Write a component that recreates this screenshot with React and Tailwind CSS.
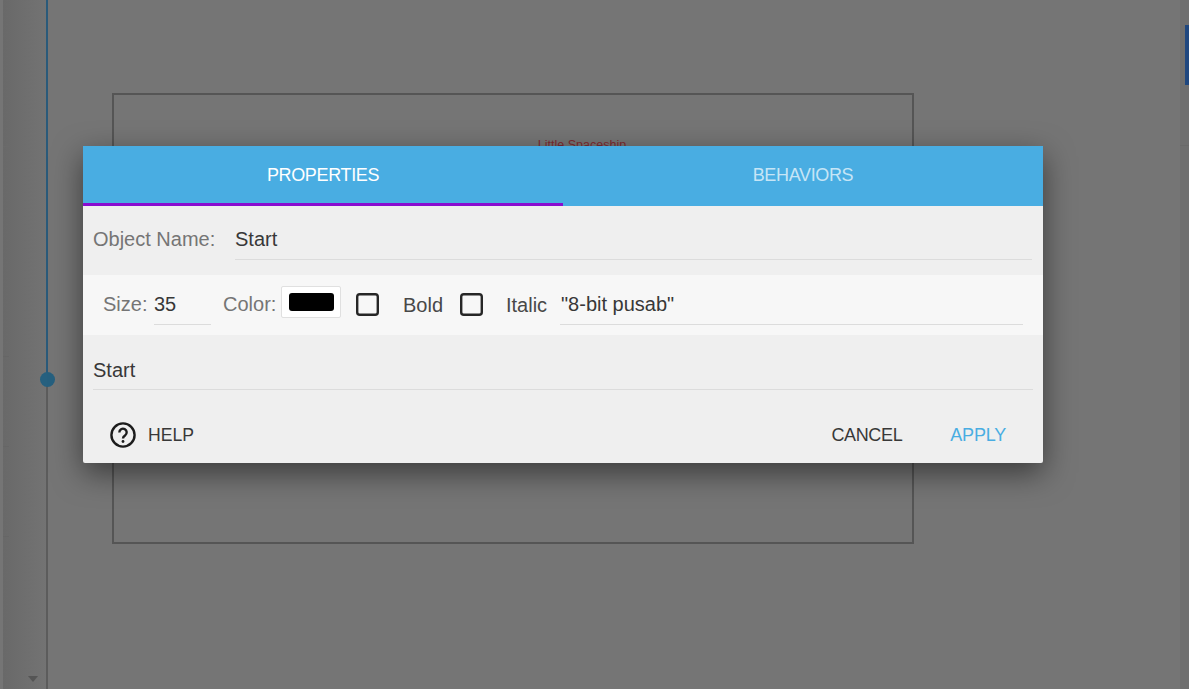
import React from "react";

function Underlined({ value, className = "" }) {
  return (
    <div className={`border-b border-[#dcdcdc] text-[20px] leading-[24px] text-[#383838] ${className}`}>{value}</div>
  );
}

function Check({ className = "" }) {
  return (
    <svg width="23" height="23" viewBox="0 0 23 23" fill="none" className={`shrink-0 ${className}`}>
      <rect x="1.2" y="1.2" width="20.6" height="20.6" rx="2.6" stroke="#262626" strokeWidth="2.4" />
    </svg>
  );
}

export default function App() {
  return (
    <div className="relative h-[689px] w-[1189px] overflow-hidden bg-[#757575] font-['Liberation_Sans',Arial,sans-serif]">
      <div className="flex h-full">
        <div className="relative w-[45px] shrink-0 ml-[3px] bg-gradient-to-r from-[#696969] to-[#737373] border-r-2 border-[#5c5c5c]">
          <div className="absolute right-[-2px] top-0 h-[379px] w-[2px] bg-[#2a5a7a]" />
          <div className="absolute left-[36.5px] top-[371.5px] h-[15px] w-[15px] rounded-full bg-[#26607f]" />
          <div className="absolute left-0 top-[146px] h-px w-[6px] bg-[#6b6b6b]" />
          <div className="absolute left-0 top-[356px] h-px w-[6px] bg-[#666]" />
          <div className="absolute left-0 top-[446px] h-px w-[6px] bg-[#666]" />
          <div className="absolute left-0 top-[536px] h-px w-[6px] bg-[#666]" />
          <div className="absolute left-[24.5px] top-[676px] h-0 w-0 border-x-[5px] border-t-[6px] border-x-transparent border-t-[#555]" />
        </div>
        <div className="flex-1 pl-[64px] pt-[93px]">
          <div className="h-[451px] w-[802px] border-2 border-[#555] pt-[43px] text-center text-[12.5px] leading-[14px] text-[#7d2a30]">
            <span className="relative left-[69px]">Little Spaceship</span>
          </div>
        </div>
        <div className="relative w-[9px] shrink-0 bg-[#6f6f6f]">
          <div className="absolute right-0 top-[25px] h-[60px] w-[4px] bg-[#1f477f]" />
          <div className="absolute inset-x-0 top-[145px] h-px bg-[#6a6a6a]" />
        </div>
      </div>

      <div className="absolute left-[83px] top-[146px] w-[960px] rounded-[2px] bg-[#efefef] shadow-[0_10px_30px_rgba(0,0,0,0.5)]">
        <div className="flex h-[60px] bg-[#49ade2] text-[18px] tracking-[-0.35px]">
          <div className="flex w-1/2 items-center justify-center border-b-[3px] border-[#8a0ccf] pt-[2px] text-white">PROPERTIES</div>
          <div className="flex w-1/2 items-center justify-center border-b-[3px] border-transparent pt-[2px] text-[#c6e5f6]">BEHAVIORS</div>
        </div>

        <div className="flex h-[69px] items-start pl-[10px] pr-[11px] pt-[21px]">
          <span className="w-[142px] shrink-0 text-[20px] leading-[24px] text-[#757575]">Object Name:</span>
          <Underlined value="Start" className="h-[33px] flex-1" />
        </div>

        <div className="flex h-[60px] items-start bg-[#f7f7f7] pl-[20px] text-[#757575]">
          <span className="mt-[17px] w-[51px] shrink-0 text-[20px] leading-[24px]">Size:</span>
          <Underlined value="35" className="mt-[17px] h-[33px] w-[57px] shrink-0" />
          <span className="ml-[12px] mt-[17px] w-[58px] shrink-0 text-[20px] leading-[24px]">Color:</span>
          <div className="mt-[11px] flex h-[32px] w-[60px] shrink-0 items-center justify-center rounded-[2px] border border-[#e0e0e0] bg-white">
            <div className="h-[18px] w-[45px] rounded-[3px] bg-black" />
          </div>
          <Check className="ml-[15px] mt-[18px]" />
          <span className="ml-[24px] mt-[18px] w-[57px] shrink-0 text-[20px] leading-[24px] text-[#484848]">Bold</span>
          <Check className="mt-[18px]" />
          <span className="ml-[23px] mt-[18px] w-[54px] shrink-0 text-[20px] leading-[24px] text-[#484848]">Italic</span>
          <Underlined value={'"8-bit pusab"'} className="mt-[17px] h-[33px] w-[463px] shrink-0 pl-px" />
        </div>

        <div className="px-[10px] pt-[23px]">
          <Underlined value="Start" className="h-[32px]" />
        </div>

        <div className="flex h-[73px] items-start">
          <div className="ml-[27px] mt-[32px] flex items-center">
            <svg width="26" height="26" viewBox="0 0 24 24" fill="none" className="shrink-0">
              <circle cx="12" cy="12" r="10.7" stroke="#1c1c1c" strokeWidth="2.2" />
              <path d="M8.6 9.6a3.4 3.4 0 1 1 5.3 2.8c-1.2.8-1.9 1.4-1.9 2.8" stroke="#1c1c1c" strokeWidth="2.2" />
              <circle cx="12" cy="18" r="1.3" fill="#1c1c1c" />
            </svg>
            <span className="ml-[12px] text-[17.6px] leading-[24px] text-[#383838]">HELP</span>
          </div>
          <div className="ml-auto mr-[37px] mt-[33px] flex text-[18px] leading-[24px]">
            <span className="text-[#383838] tracking-[-0.35px]">CANCEL</span>
            <span className="ml-[48px] text-[#49ade2] tracking-[-0.2px]">APPLY</span>
          </div>
        </div>
      </div>
    </div>
  );
}
